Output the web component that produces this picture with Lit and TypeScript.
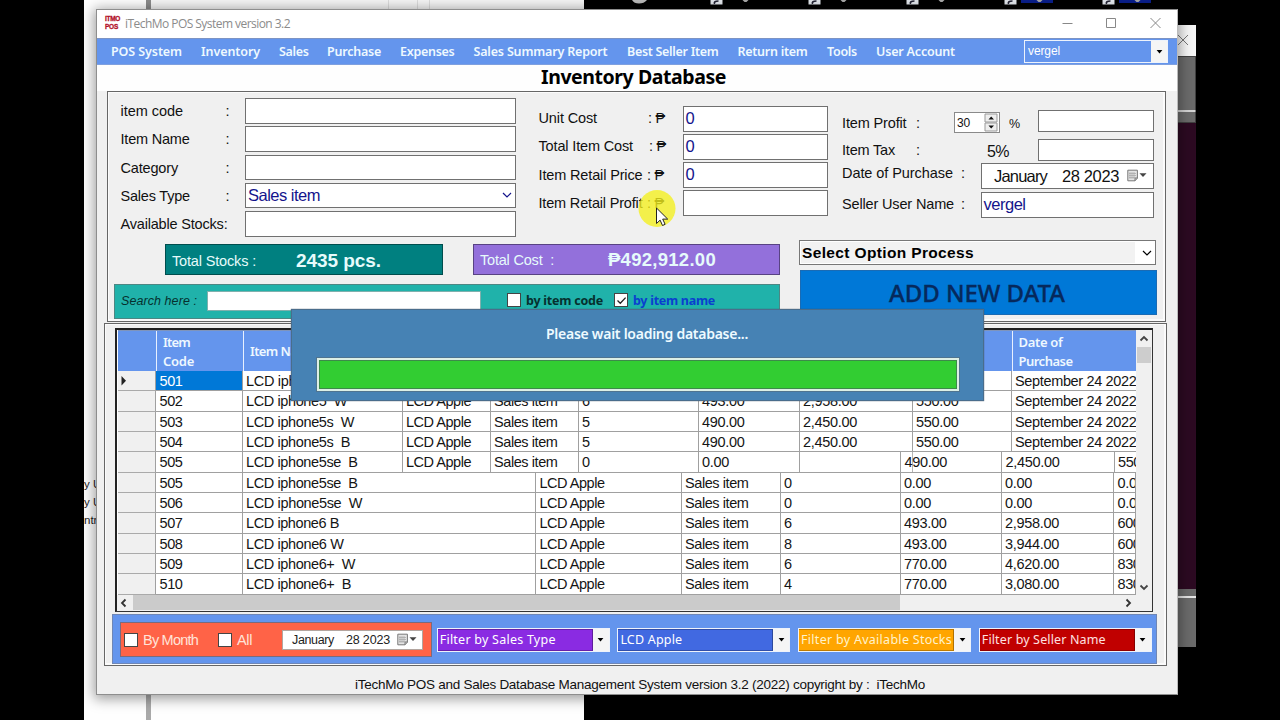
import { LitElement, html, css, svg, nothing } from "lit";
import { customElement, property } from "lit/decorators.js";
import { classMap } from "lit/directives/class-map.js";

/* A run of text tracked so that it fills a given width. */
@customElement("fit-text")
class FitText extends LitElement {
  @property() text = "";
  @property({ type: Number }) w = 0;
  static styles = css`
    :host { display: inline-block; white-space: pre; flex: none; }
    .run { display: inline-block; }
  `;
  updated() {
    const el = this.renderRoot.querySelector(".run") as HTMLElement;
    el.style.letterSpacing = "0";
    const natural = el.getBoundingClientRect().width;
    if (this.w) el.style.letterSpacing = `${(this.w - natural) / this.text.length}px`;
  }
  render() {
    return html`<span class="run">${this.text}</span>`;
  }
}

const t = (text: string, w: number, cls = "") => html`<fit-text class=${cls} .text=${text} .w=${w}></fit-text>`;

const menu: [string, number, number][] = [
  ["POS System", 111, 71], ["Inventory", 201, 59], ["Sales", 279, 29.5], ["Purchase", 327, 54],
  ["Expenses", 400, 54.5], ["Sales Summary Report", 473.5, 134], ["Best Seller Item", 627, 91.5],
  ["Return item", 737.5, 70], ["Tools", 827, 30], ["User Account", 876, 79],
];

const wide = [86.5, 160, 88, 88, 120, 101, 113, 99, 125];
const late = [86.5, 160, 88, 88, 120, 101, 101.5, 101, 112.5, 22];
const shifted = [86.5, 293.5, 145.5, 99, 120, 101, 112.5, 22];
const date = "September 24 2022";
const rows: { w: number[]; c: string[] }[] = [
  { w: wide, c: ["501", "LCD iphone5  B", "LCD Apple", "Sales item", "6", "493.00", "2,958.00", "550.00", date] },
  { w: wide, c: ["502", "LCD iphone5  W", "LCD Apple", "Sales item", "6", "493.00", "2,958.00", "550.00", date] },
  { w: wide, c: ["503", "LCD iphone5s  W", "LCD Apple", "Sales item", "5", "490.00", "2,450.00", "550.00", date] },
  { w: wide, c: ["504", "LCD iphone5s  B", "LCD Apple", "Sales item", "5", "490.00", "2,450.00", "550.00", date] },
  { w: late, c: ["505", "LCD iphone5se  B", "LCD Apple", "Sales item", "0", "0.00", "", "490.00", "2,450.00", "550"] },
  { w: shifted, c: ["505", "LCD iphone5se  B", "LCD Apple", "Sales item", "0", "0.00", "0.00", "0.00"] },
  { w: shifted, c: ["506", "LCD iphone5se  W", "LCD Apple", "Sales item", "0", "0.00", "0.00", "0.00"] },
  { w: shifted, c: ["507", "LCD iphone6 B", "LCD Apple", "Sales item", "6", "493.00", "2,958.00", "600"] },
  { w: shifted, c: ["508", "LCD iphone6 W", "LCD Apple", "Sales item", "8", "493.00", "3,944.00", "600"] },
  { w: shifted, c: ["509", "LCD iphone6+  W", "LCD Apple", "Sales item", "6", "770.00", "4,620.00", "830"] },
  { w: shifted, c: ["510", "LCD iphone6+  B", "LCD Apple", "Sales item", "4", "770.00", "3,080.00", "830"] },
];

const nameWidths: Record<string, number> = {
  "LCD iphone5  B": 98, "LCD iphone5  W": 101, "LCD iphone5s  W": 108, "LCD iphone5s  B": 104,
  "LCD iphone5se  B": 111.5, "LCD iphone5se  W": 116, "LCD iphone6 B": 93, "LCD iphone6 W": 97.5,
  "LCD iphone6+  W": 109, "LCD iphone6+  B": 105,
};

const chevron = (d: string, cls = "") => html`<svg class="chev ${cls}" width="10" height="10" viewBox="0 0 10 10">${svg`<path d=${d} fill="none" stroke="currentColor"/>`}</svg>`;
const calendar = html`<svg class="cal" width="20" height="13" viewBox="0 0 20 13">
  <path d="M.8 1.2h9.6v8l-2.4 2.6H.8z" fill="#e4e4e4" stroke="#777"/><path d="M10.4 9H8v2.8" fill="none" stroke="#777"/>
  <path d="M3 3v7M5 3v7M7 3v7M2 4.5h7M2 6.5h7M2 8.5h6" stroke="#aaa" stroke-width=".8"/>
  <path d="M12.5 4.2h7L16 8z" fill="#444"/></svg>`;
const tick = html`<svg width="11" height="11" viewBox="0 0 11 11"><path d="M1.5 5.5l2.8 2.8L9.6 2.6" fill="none" stroke="#222" stroke-width="1.3"/></svg>`;

const combo = (text: string, w: number, cls: string) => html`<div class="combo ${cls}">
  <span class="value">${t(text, w)}</span>
  <span class="drop"><svg width="7" height="4" viewBox="0 0 7 4"><path d="M.6 0h5.8L3.5 3.5z" fill="#000"/></svg></span></div>`;

@customElement("app-root")
class AppRoot extends LitElement {
  static styles = css`
    * { box-sizing: border-box; }
    :host { display: block; position: relative; width: 1280px; height: 720px; overflow: hidden; background: #000;
      font: 14.5px/18px "Liberation Sans", sans-serif; color: #111; }
    svg { display: block; flex: none; }

    .behind { position: absolute; left: 84px; top: 0; width: 500px; height: 720px; display: flex; background: #fefefe; font-size: 11.5px; overflow: hidden; }
    .behind .nav { width: 62px; padding: 475px 0 0 0; white-space: pre; color: #222; }
    .behind .rule { width: 5px; background: linear-gradient(#8b8b8b 0 9px, #a9a9a9 0); }
    .behind .page { flex: 1; display: flex; align-items: flex-start; padding-left: 237px; background: linear-gradient(#f6f6f6 0 9px, #fefefe 0); }
    .behind .page i { height: 9px; width: 30px; border-left: 1px solid #ddd; border-right: 1px solid #ddd; }
    .behind .page b { height: 9px; width: 80px; margin-left: 11px; border-left: 1px solid #ddd; }
    .shortcuts { position: absolute; left: 600px; top: 0; }
    .terminal { position: absolute; left: 1160px; top: 25px; width: 36px; height: 622px; display: flex; flex-direction: column; background: #2c0a22; }
    .terminal .cap { height: 31px; background: #f7f7f7; color: #777; padding: 9px 0 0 17px; }
    .terminal .bar { height: 67px; background: linear-gradient(#6b6b6b 0 53px, #d5d5d5 53px 55px, #6b6b6b 55px); }
    .terminal .foot { height: 58px; margin-top: auto; background: linear-gradient(#6b6b6b 0 7px, #e5e5e5 7px 8.5px, #6b6b6b 8.5px); }

    .window { position: absolute; left: 96px; top: 9px; width: 1082px; height: 686px; background: #f0f0f0; border: 1px solid #8e8e8e;
      border-right-color: #bbb; box-shadow: 0 2px 12px 2px rgba(0,0,0,.38); display: flex; flex-direction: column; }
    .titlebar { height: 28px; background: #fff; display: flex; align-items: center; padding: 0 16px 2px 8px; color: #8b8b8b; font: 12px "Open Sans", sans-serif; }
    .logo { width: 15px; font: 900 6.5px/7px "Liberation Sans", sans-serif; color: #b3122b; margin: 1px 5px 0 0; padding-bottom: 2px; }
    .logo fit-text { display: block; height: 7.5px; -webkit-text-stroke: .3px #b3122b; }
    .controls { margin-left: auto; display: flex; gap: 33px; color: #888; padding-bottom: 1px; }
    .menubar { height: 27px; background: #6495ed; border-top: 1px solid #7d94c4; border-bottom: 1px solid #7fa0df; display: flex; align-items: center;
      padding: 0 9px 0 14px; color: #eef9ff; font: 600 12.5px "Noto Sans", sans-serif; }
    .slot { flex: none; }
    .heading { height: 26px; background: #fefefe; padding-left: 444px; font: bold 19.5px/24px "Noto Sans", sans-serif; color: #000; }

    .combo { display: flex; border: 1.5px solid #eef3fb; background: #f5f5f5; height: 24px; width: 173px; flex: none; color: #fff; font: 12.5px/20px "Noto Sans", sans-serif; }
    .combo .value { flex: 1; overflow: hidden; padding-left: 2px; border-right: 1px solid rgba(0,0,0,.3); border-top: 1px solid rgba(0,0,0,.25); border-bottom: 1px solid rgba(0,0,0,.25); }
    .combo .drop { width: 16px; display: grid; place-items: center; }
    .user { width: 144px; height: 23px; margin: 0 0 0 auto; font: 12px/19px "Liberation Sans", sans-serif; }
    .user .value { background: #6495ed; border: 1px solid #6495ed; }

    .panel { border: 1px solid #666; box-shadow: inset -2px -2px 0 #fbfbfb, inset 1px 1px 0 #fbfbfb; }
    .entry { margin: 0 11px 0 10px; height: 231px; flex: none; padding: 6px 9px 0 6px; display: grid;
      grid-template-columns: 417px 292px 1fr; grid-template-rows: 139px 1fr; }
    .field { background: #fff; border: 1px solid #707070; height: 25.5px; font-size: 16.5px; line-height: 22px; color: #14148c; padding-left: 2px; }
    .left { display: grid; grid-template-columns: 105px 19.5px 270.5px; grid-auto-rows: 28.25px; padding-left: 6.5px; align-items: start; }
    .left > .lab { line-height: 26px; }
    .mid > .lab { line-height: 24.5px; }
    .drops { display: flex; justify-content: space-between; align-items: center; padding: 0 3px 2px 2px; }
    .mid { display: grid; grid-template-columns: 108px 36px 145.5px; grid-auto-rows: 28px; padding: 8px 0 0 7.5px; align-items: start; }
    .mid .lab:nth-child(n + 7) { padding-top: 1px; }
    .right { display: flex; flex-direction: column; padding: 12px 2px 0 19px; }
    .line { display: flex; align-items: flex-start; }
    .line .lab { width: 74px; }
    .line .end { margin-left: auto; }
    .spin { width: 46px; height: 21px; border: 1px solid #8a8a8a; background: #fff; display: flex; justify-content: space-between; padding: 0 0 0 2px; font-size: 12px; line-height: 20px; }
    .small { width: 116.5px; height: 21.5px; }
    .datebox { width: 173.5px; color: #111; display: flex; align-items: center; padding: 0 6px 0 12.5px; }
    .datebox fit-text:nth-child(2) { margin-left: 15px; }
    .cal { margin-left: auto; }

    .totals { grid-column: 1 / 3; display: flex; flex-direction: column; padding: 7px 0 0 0; }
    .bars { display: flex; gap: 30px; padding-left: 51px; }
    .bar { height: 31px; border: 1px solid rgba(0,0,0,.4); display: flex; align-items: center; padding: 3px 6px 0; color: #e6fbfb; }
    .stocks { width: 278px; background: #008080; }
    .cost { width: 307px; background: #9370db; padding-top: 1px; }
    .big { font-weight: bold; font-size: 19px; }
    .stocks .big { margin-left: 40px; }
    .cost .big { margin-left: 54px; font-size: 18.5px; }
    .search { margin: 9px 0 0; width: 666px; height: 34.5px; background: #20b2aa; border: 1px solid #4d8683; display: flex; align-items: center; padding: 0 0 0 6px; }
    .search .ital { font-style: italic; font-size: 12.5px; color: #06302e; }
    .search .box { width: 274px; height: 20px; background: #fff; margin: 0 26px 0 auto; border: 1px solid #7fb0ad; }
    .check { width: 14px; height: 14px; border: 1.5px solid #444; background: #fff; display: grid; place-items: center; flex: none; }
    .search .opts { display: flex; align-items: center; width: 272px; font: bold 12.5px "Noto Sans", sans-serif; color: #06302e; padding-bottom: 2px; }
    .opts fit-text { margin-left: 5px; width: 88px; }
    .opts .on { color: #0a3fd0; }
    .actions { display: flex; flex-direction: column; gap: 5px; padding: 3px 0 0; margin: 0 -1px 0 -24px; }
    .select { height: 25px; width: 357px; border: 1px solid #777; background: #f2f2f2; display: flex; align-items: center; justify-content: space-between; padding: 0 3px 0 2px; font-weight: bold; font-size: 15.5px; color: #000; box-shadow: inset 0 0 0 1px #fff, inset -20px 0 0 #fff; }
    .add { height: 45px; width: 357px; margin-left: 1px; background: #0078d7; border: 1px solid #1a6bb4; display: grid; place-items: center; font: 500 24px/30px "Noto Sans", sans-serif; color: #06295c; padding: 1px 3px 0 0; -webkit-text-stroke: .3px #06295c; }

    .list { margin: 1px 10px 0 7px; height: 343px; flex: none; padding: 4px 9px 0 7px; display: flex; flex-direction: column; }
    .grid { height: 284px; width: 1038px; margin-left: 3px; border: 2px solid #222; border-bottom-color: #333; border-right: 1.5px solid #333; background: #fff; display: grid; grid-template: 264.5px 16px / 1018.5px 16px; }
    .cells { overflow: hidden; display: flex; flex-direction: column; padding-left: 1px; }
    .head { display: flex; height: 41px; flex: none; background: #6495ed; border-top: 1px solid #7f94bb; color: #eef8ff; font: 600 13px/18.5px "Noto Sans", sans-serif; align-items: center; }
    .head > div { height: 40px; display: flex; flex-direction: column; justify-content: center; padding: 1px 0 0 6px; border-left: 1.5px solid #e8f0ff; flex: none; }
    .head > div:first-child { border: 0; }
    .row { display: flex; height: 20.33px; flex: none; width: 1040px; }
    .row > div { flex: none; border-right: 1px solid #a0a0a0; border-bottom: 1px solid #a0a0a0; padding-left: 3.5px; line-height: 20px; overflow: hidden; white-space: pre; color: #151515; }
    .row .rh { width: 38px; background: #f0f0f0; border-bottom-color: #aaa; padding: 5px 0 0 3px; }
    .row .sel { background: #0078d7; color: #fff; }
    .row .ghost { background: linear-gradient(90deg, #fff 11px, #b5b5b5 11px 12px, #fff 12px); }
    .vs { background: #f0f0f0; display: flex; flex-direction: column; align-items: center; color: #444; padding: 4px 0 3px; }
    .vs .thumb { width: 14px; height: 16px; background: #cdcdcd; margin: 3px 0 auto; }
    .hs { grid-column: 1 / 3; background: #f0f0f0; display: flex; align-items: center; color: #333; padding: 0 19px 0 2px; }
    .hs .thumb { width: 767px; height: 15px; background: #cbcbcb; margin: 0 auto 0 4px; }
    .chev { stroke-width: 1.2; }
    .bold { stroke-width: 1.8; }

    .filters { margin-top: 2px; height: 50px; width: 1045px; border: 1.5px solid #6f86b5; background: #6495ed; display: flex; align-items: center; gap: 7.7px; padding: 1.5px 4px 0 7px; }
    .month { width: 312px; height: 35px; border: 1.5px solid #7b6a7d; background: #ff6347; display: flex; align-items: center; color: #ffe3d9; padding: 0 8px 0 3px; margin: 0 -3px 0 0; }
    .month fit-text { margin-left: 5px; }
    .month .all { margin-left: 20px; }
    .month .when { margin-left: auto; width: 141px; height: 20px; border: 1px solid #b3a59f; background: #fff; color: #222; font-size: 12.5px; display: flex; align-items: center; padding: 0 5px 0 9px; }
    .month .when fit-text:first-child { margin-left: 0; }
    .when fit-text:nth-child(2) { margin-left: 12px; }
    .violet .value { background: #8a2be2; } .royal .value { background: #4169e1; }
    .amber .value { background: #ffa500; color: #fff3cc; } .crimson .value { background: #c00000; color: #ffe0e0; }
    .status { text-align: center; padding: 10px 0 0 6px; font-size: 13.5px; line-height: 18px; height: 28px; }

    .splash { position: absolute; left: 291px; top: 309px; width: 693px; height: 92px; background: #4682b4; border: 1px solid #4a6d8c; box-shadow: 0 0 1px #456; padding: 14px 24px 0 25px; display: flex; flex-direction: column; color: #eefaff; font: 600 14px/19px "Noto Sans", sans-serif; }
    .splash fit-text { align-self: center; margin-left: 18px; }
    .splash .track { margin-top: 15px; height: 33px; border: 2px solid #dcefe6; outline: 1px solid #4f7490; background: #32cd32; box-shadow: inset 0 0 0 1px #3d8a4a; }
    .pointer { position: absolute; left: 638px; top: 190px; }
  `;

  private row(r: { w: number[]; c: string[] }, i: number) {
    return html`<div class="row"><div class="rh">${i ? nothing : html`<svg width="6" height="10" viewBox="0 0 6 10"><path d="M.5 0L5 4.7.5 9.5z" fill="#222"/></svg>`}</div>
      ${r.c.map((c, j) => {
        const fits = nameWidths[c] ?? (c === "LCD Apple" ? 65 : c === "Sales item" ? 63.5 : c === date ? 121.5 : /^\d{3}$/.test(c) ? 23 : /^\d,\d+\./.test(c) ? 54 : /^\d{3}\./.test(c) ? 42.5 : c === "0.00" ? 27 : 0);
        return html`<div class=${classMap({ sel: !i && !j, ghost: r.w === late && j === 7 })} style="width:${r.w[j]}px">${t(c, fits)}</div>`;
      })}</div>`;
  }

  render() {
    const peso = (label: string, w: number, colon: number, value: string) => html`
      <div class="lab">${t(label, w)}</div><div class="lab" style="padding-left:${colon}px">${t(": ₱", 17)}</div><div class="field">${value}</div>`;
    return html`
      <div class="behind"><div class="nav">y U
y U
ntrol</div><div class="rule"></div><div class="page"><i></i><b></b></div></div>
      <svg class="shortcuts" width="600" height="9" viewBox="0 0 600 9">
        <path d="M32 0h15q-3 3.500-8 3.500T32 0z" fill="#bbb"/>
        <path d="M421 0h32v3h-32zM519 0h32v3h-32z" fill="#0a1f8c"/>
        ${[110.5, 208.5, 306.5, 404.5, 502.5].map((a) => svg`<path d="M${a} 0h12v4.500h-12z" fill="#e4e8ee"/><path d="M${a + 4} 4q-1-3 4-3" fill="none" stroke="#223" stroke-width="1.600"/><path d="M${a + 32} 0h6l-2 2h-2z" fill="#aaa"/>`)}
      </svg>
      <div class="terminal"><div class="cap"><svg width="14" height="12" viewBox="0 0 14 12"><path d="M1 1l10 10M11 1L1 11" stroke="currentColor"/></svg></div><div class="bar"></div><div class="foot"></div></div>

      <div class="window">
        <div class="titlebar">
          <div class="logo">${t("ITMO", 15)}${t("POS", 13)}</div>${t("iTechMo POS System version 3.2", 165)}
          <div class="controls">
            <svg width="11" height="11" viewBox="0 0 11 11"><path d="M.5 6.500h10" stroke="currentColor"/></svg>
            <svg width="11" height="11" viewBox="0 0 11 11"><path d="M.5 1.500h9v9h-9z" fill="none" stroke="currentColor"/></svg>
            <svg width="11" height="11" viewBox="0 0 11 11"><path d="M.5 1l10 10M10.500 1l-10 10" stroke="currentColor"/></svg>
          </div>
        </div>
        <div class="menubar">
          ${menu.map(([label, , w], i) => html`<span class="slot" style="width:${(menu[i + 1]?.[1] ?? 960) - menu[i][1]}px">${t(label, w)}</span>`)}
          ${combo("vergel", 32, "user")}
        </div>
        <div class="heading">${t("Inventory Database", 185)}</div>

        <div class="entry panel">
          <div class="left">
            <div class="lab">${t("item code", 62.5)}</div><div class="lab">:</div><div class="field"></div>
            <div class="lab">${t("Item Name", 69)}</div><div class="lab">:</div><div class="field"></div>
            <div class="lab">${t("Category", 57.5)}</div><div class="lab">:</div><div class="field"></div>
            <div class="lab">${t("Sales Type", 69.5)}</div><div class="lab">:</div><div class="field drops">${t("Sales item", 72)}${chevron("M1 3l4 4 4-4")}</div>
            <div class="lab">${t("Available Stocks:", 107)}</div><div></div><div class="field"></div>
          </div>
          <div class="mid">
            ${peso("Unit Cost", 58.5, 1.5, "0")}${peso("Total Item Cost", 94.5, 2.5, "0")}
            ${peso("Item Retail Price", 104, 0.5, "0")}${peso("Item Retail Profit", 104, 0.5, "")}
          </div>
          <div class="right">
            <div class="line" style="height:29px"><div class="lab" style="padding-top:4px">${t("Item Profit", 64.5)}</div><div style="padding-top:4px">:</div>
              <div class="spin" style="margin:2px 9px 0 34px">${t("30", 13)}<svg width="15" height="19" viewBox="0 0 15 19"><path d="M1 1h12v8H1zM1 10h12v8H1z" fill="#eee" stroke="#999"/><path d="M4.500 6.500h5.500L7.200 3.500zM4.500 12.500h5.500l-2.800 3z" fill="#111"/></svg></div>
              <span style="font-size:12.5px;padding-top:5px">%</span><div class="field small end"></div></div>
            <div class="line" style="height:24px"><div class="lab" style="padding-top:2px">${t("Item Tax", 53)}</div><div style="padding-top:2px">:</div>
              <span style="margin-left:67px;padding-top:4px;font-size:16px">${t("5%", 22)}</span><div class="field small end"></div></div>
            <div class="line" style="height:29px"><div class="lab" style="width:119px;padding-top:1px">${t("Date of Purchase", 111)}</div><span style="padding-top:1px">:</span>
              <div class="field datebox end">${t("January", 53)}${t("28 2023", 57)}${calendar}</div></div>
            <div class="line"><div class="lab" style="width:119px;padding-top:2.5px">${t("Seller User Name", 112)}</div><span style="padding-top:2.5px">:</span>
              <div class="field end" style="width:173.5px">${t("vergel", 42)}</div></div>
          </div>
          <div class="totals">
            <div class="bars">
              <div class="bar stocks">${t("Total Stocks :", 84)}${t("2435 pcs.", 85, "big")}</div>
              <div class="bar cost">${t("Total Cost  :", 74)}${t("₱492,912.00", 108, "big")}</div>
            </div>
            <div class="search">${t("Search here :", 76, "ital")}<div class="box"></div>
              <div class="opts"><span class="check"></span>${t("by item code", 77)}<span class="check">${tick}</span>${t("by item name", 82, "on")}</div></div>
          </div>
          <div class="actions">
            <div class="select">${t("Select Option Process", 172)}${chevron("M1 3l4 4 4-4")}</div>
            <div class="add">${t("ADD NEW DATA", 176)}</div>
          </div>
        </div>

        <div class="list panel">
          <div class="grid">
            <div class="cells">
              <div class="head"><div style="width:38px"></div><div style="width:87px">${t("Item", 27)}${t("Code", 31)}</div><div style="width:768.5px">${t("Item Name", 66)}</div><div>${t("Date of", 44)}${t("Purchase", 54)}</div></div>
              ${rows.map((r, i) => this.row(r, i))}
            </div>
            <div class="vs">${chevron("M1.500 6.500L5 3l3.500 3.500", "bold")}<div class="thumb"></div>${chevron("M1.500 3.500L5 7l3.500-3.500", "bold")}</div>
            <div class="hs">${chevron("M6.500 1.500L3 5l3.500 3.500", "bold")}<div class="thumb"></div>${chevron("M3.500 1.500L7 5 3.500 8.500", "bold")}</div>
          </div>
          <div class="filters">
            <div class="month"><span class="check"></span>${t("By Month", 55)}<span class="check all"></span>${t("All", 15)}
              <div class="when">${t("January", 42)}${t("28 2023", 44)}${calendar}</div></div>
            ${combo("Filter by Sales Type", 116, "violet")}${combo("LCD Apple", 62, "royal")}
            ${combo("Filter by Available Stocks", 151, "amber")}${combo("Filter by Seller Name", 124, "crimson")}
          </div>
        </div>
        <div class="status">${t("iTechMo POS and Sales Database Management System version 3.2 (2022) copyright by :  iTechMo", 570)}</div>
      </div>

      <div class="splash">${t("Please wait loading database...", 202)}<div class="track"></div></div>
      <svg class="pointer" width="38" height="38" viewBox="0 0 38 38"><circle cx="19" cy="18.500" r="18.500" fill="#f4f01c" opacity=".78"/>
        <path d="M18.500 18v15.500l3.600-3.400 2.400 5.400 2.600-1.200-2.400-5.200h5z" fill="#fff" stroke="#222" stroke-width="1"/></svg>
    `;
  }
}
